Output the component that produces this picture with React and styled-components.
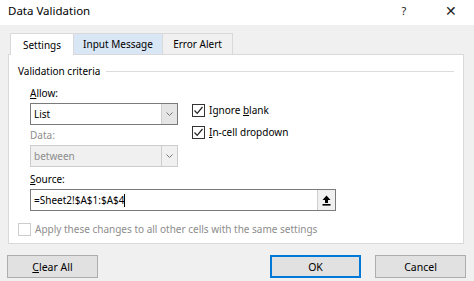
import React from 'react'
import styled, { createGlobalStyle } from 'styled-components'

const GlobalStyle = createGlobalStyle`
  html, body {
    margin: 0;
    padding: 0;
    background: #f0f0f0;
  }
  body {
    font-family: "Noto Sans", "Liberation Sans", sans-serif;
    font-size: 10px;
    color: #000;
  }
`

const Dialog = styled.div`
  width: 474px;
  height: 281px;
  display: flex;
  flex-direction: column;
  background: #f0f0f0;
  overflow: hidden;
  white-space: nowrap;
`

const TitleBar = styled.div`
  height: 25px;
  flex: none;
  background: #fff;
  display: flex;
  align-items: center;
  padding: 0 0 4px 8px;
  box-sizing: border-box;
`

const Title = styled.div`
  flex: 1;
  font-size: 11.5px;
`

const TitleButton = styled.div`
  width: ${p => (p.$big ? '46px' : '48px')};
  text-align: center;
  font-size: ${p => (p.$big ? '14px' : '11px')};
  color: #222;
`

const Body = styled.div`
  padding: 7px 10px 0 8px;
`

const Tabs = styled.div`
  display: flex;
  align-items: flex-end;
  height: 22px;
  padding-left: 2px;
`

const Tab = styled.div`
  height: ${p => (p.$active ? '22px' : '21px')};
  box-sizing: border-box;
  display: flex;
  align-items: center;
  justify-content: center;
  border: 1px solid #d9d9d9;
  border-bottom: none;
  border-left: ${p => (p.$first ? '1px solid #d9d9d9' : 'none')};
  background: ${p => (p.$active ? '#fff' : p.$hover ? '#d8e6f5' : '#f0f0f0')};
  width: ${p => p.$w}px;
  margin-bottom: ${p => (p.$active ? '-1px' : '0')};
  position: relative;
  z-index: ${p => (p.$active ? 1 : 0)};
`

const Panel = styled.div`
  height: 190px;
  box-sizing: border-box;
  background: #fff;
  border: 1px solid #d9d9d9;
  padding: 9px 9px 0 9px;
`

const GroupHead = styled.div`
  display: flex;
  align-items: center;
  gap: 6px;
  &::after {
    content: '';
    flex: 1;
    height: 1px;
    background: #dcdcdc;
  }
`

const Group = styled.div`
  padding: 8px 0 0 12px;
  display: grid;
  grid-template-columns: 148px 1fr;
  column-gap: 14px;
`

const Fields = styled.div`
  display: flex;
  flex-direction: column;
`

const Label = styled.div`
  color: ${p => (p.$disabled ? '#8d8d8d' : '#000')};
  height: 15px;
  line-height: 15px;
  margin-bottom: 2px;
  u { text-decoration: underline; text-underline-offset: 1px; }
`

const Select = styled.div`
  height: 22px;
  box-sizing: border-box;
  display: flex;
  border: 1px solid ${p => (p.$disabled ? '#cccccc' : '#7a7a7a')};
  background: ${p => (p.$disabled ? '#f0f0f0' : '#fff')};
  color: ${p => (p.$disabled ? '#8d8d8d' : '#000')};
  margin-bottom: ${p => p.$mb || 0}px;
`

const SelectText = styled.div`
  flex: 1;
  display: flex;
  align-items: center;
  padding-left: 3px;
`

const Arrow = styled.div`
  width: 15px;
  background: ${p => (p.$disabled ? '#f0f0f0' : '#e5e5e5')};
  border-left: 1px solid ${p => (p.$disabled ? '#cccccc' : '#cfcfcf')};
  display: flex;
  align-items: center;
  justify-content: center;
`

const Checks = styled.div`
  display: flex;
  flex-direction: column;
  gap: 8px;
  padding-top: 17px;
`

const CheckRow = styled.div`
  display: flex;
  align-items: center;
  gap: 4px;
  height: 14px;
  color: ${p => (p.$disabled ? '#8d8d8d' : '#000')};
  u { text-decoration: underline; text-underline-offset: 1px; }
`

const Box = styled.div`
  width: 13px;
  height: 13px;
  box-sizing: border-box;
  border: 1px solid ${p => (p.$disabled ? '#cccccc' : '#333')};
  background: #fff;
  display: flex;
  align-items: center;
  justify-content: center;
  flex: none;
`

const SourceBlock = styled.div`
  padding: 5px 0 0 12px;
`

const SourceInput = styled.div`
  width: 306px;
  height: 22px;
  box-sizing: border-box;
  border: 1px solid #7a7a7a;
  display: flex;
`

const InputText = styled.div`
  flex: 1;
  display: flex;
  align-items: center;
  padding-left: 3px;
`

const Caret = styled.span`
  display: inline-block;
  width: 1px;
  height: 13px;
  background: #000;
`

const PickButton = styled.div`
  width: 17px;
  border-left: 1px solid #cfcfcf;
  background: #f0f0f0;
  display: flex;
  align-items: center;
  justify-content: center;
`

const ApplyRow = styled(CheckRow)`
  padding: 11px 0 0 0;
`

const Footer = styled.div`
  display: flex;
  padding: 11px 8px 0 7px;
  gap: 14px;
`

const Button = styled.div`
  width: 91px;
  height: 23px;
  box-sizing: border-box;
  display: flex;
  align-items: center;
  justify-content: center;
  background: #e1e1e1;
  border: ${p => (p.$primary ? '2px solid #0078d7' : '1px solid #adadad')};
  margin-right: ${p => (p.$push ? 'auto' : '0')};
  font-size: 10.5px;
  u { text-decoration: underline; text-underline-offset: 1px; }
`

const Chevron = () => (
  <svg width="7" height="4" viewBox="0 0 7 4">
    <path d="M0.5 0.5 L3.5 3.5 L6.5 0.5" fill="none" stroke="#777" strokeWidth="1" />
  </svg>
)

const Tick = () => (
  <svg width="11" height="11" viewBox="0 0 11 11">
    <path d="M1.5 5.5 L4.2 8.3 L9.5 2" fill="none" stroke="#222" strokeWidth="1.2" />
  </svg>
)

const UpIcon = () => (
  <svg width="9" height="11" viewBox="0 0 9 11">
    <path d="M4.5 0.5 L8.5 5 L6 5 L6 8 L3 8 L3 5 L0.5 5 Z" fill="#000" />
    <rect x="0.5" y="9" width="8" height="1.6" fill="#000" />
  </svg>
)

export default function App() {
  return (
    <>
      <GlobalStyle />
      <Dialog>
        <TitleBar>
          <Title>Data Validation</Title>
          <TitleButton>?</TitleButton>
          <TitleButton $big>✕</TitleButton>
        </TitleBar>
        <Body>
          <Tabs>
            <Tab $active $first $w={64}>Settings</Tab>
            <Tab $hover $w={89}>Input Message</Tab>
            <Tab $w={70}>Error Alert</Tab>
          </Tabs>
          <Panel>
            <GroupHead>Validation criteria</GroupHead>
            <Group>
              <Fields>
                <Label><u>A</u>llow:</Label>
                <Select $mb={3}>
                  <SelectText>List</SelectText>
                  <Arrow><Chevron /></Arrow>
                </Select>
                <Label $disabled>Data:</Label>
                <Select $disabled>
                  <SelectText>between</SelectText>
                  <Arrow $disabled><Chevron /></Arrow>
                </Select>
              </Fields>
              <Checks>
                <CheckRow>
                  <Box><Tick /></Box>
                  <span>Ignore <u>b</u>lank</span>
                </CheckRow>
                <CheckRow>
                  <Box><Tick /></Box>
                  <span><u>I</u>n-cell dropdown</span>
                </CheckRow>
              </Checks>
            </Group>
            <SourceBlock>
              <Label><u>S</u>ource:</Label>
              <SourceInput>
                <InputText>=Sheet2!$A$1:$A$4<Caret /></InputText>
                <PickButton><UpIcon /></PickButton>
              </SourceInput>
            </SourceBlock>
            <ApplyRow $disabled>
              <Box $disabled />
              <span>Apply these changes to all other cells with the same settings</span>
            </ApplyRow>
          </Panel>
        </Body>
        <Footer>
          <Button $push><span><u>C</u>lear All</span></Button>
          <Button $primary>OK</Button>
          <Button>Cancel</Button>
        </Footer>
      </Dialog>
    </>
  )
}
